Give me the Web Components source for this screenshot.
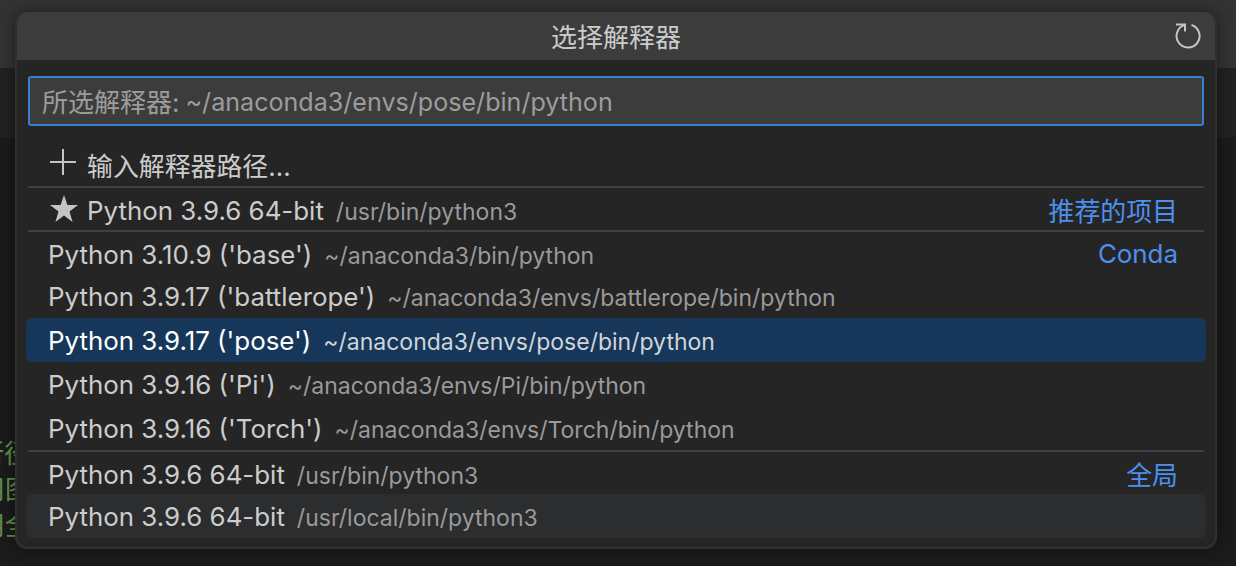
<!DOCTYPE html>
<html>
<head>
<meta charset="utf-8">
<title>选择解释器</title>
<style>
  html, body { margin: 0; height: 100%; background: #1e1e1e; overflow: hidden; }
  body { font-family: "Inter", "Noto Sans CJK SC", sans-serif; }
</style>
</head>
<body>
<editor-backdrop>
  <quick-pick title-text="选择解释器" prefix="所选解释器:" value="~/anaconda3/envs/pose/bin/python">
    <pick-row icon="plus" label="输入解释器路径..."></pick-row>
    <pick-row icon="star" sep label="Python 3.9.6 64-bit" desc="/usr/bin/python3" group="推荐的项目"></pick-row>
    <pick-row sep label="Python 3.10.9 ('base')" desc="~/anaconda3/bin/python" group="Conda"></pick-row>
    <pick-row label="Python 3.9.17 ('battlerope')" desc="~/anaconda3/envs/battlerope/bin/python"></pick-row>
    <pick-row selected label="Python 3.9.17 ('pose')" desc="~/anaconda3/envs/pose/bin/python"></pick-row>
    <pick-row label="Python 3.9.16 ('Pi')" desc="~/anaconda3/envs/Pi/bin/python"></pick-row>
    <pick-row label="Python 3.9.16 ('Torch')" desc="~/anaconda3/envs/Torch/bin/python"></pick-row>
    <pick-row sep label="Python 3.9.6 64-bit" desc="/usr/bin/python3" group="全局"></pick-row>
    <pick-row hover label="Python 3.9.6 64-bit" desc="/usr/local/bin/python3"></pick-row>
  </quick-pick>
</editor-backdrop>

<script>
class EditorBackdrop extends HTMLElement {
  connectedCallback() {
    this.attachShadow({ mode: 'open' });
    this.shadowRoot.innerHTML = `
      <style>
        :host { display: block; position: relative; width: 1236px; height: 566px; overflow: hidden; background: #1b1b1b; }
        .tabs { height: 68px; background: #333333; }
        .crumbs { height: 69px; background: #222222; }
        .lines { padding-top: 297px; color: #638f50; font: 26px/36px "Noto Sans CJK SC", sans-serif; white-space: nowrap; }
        .lines div { height: 36px; }
      </style>
      <div class="tabs"></div>
      <div class="crumbs"></div>
      <div class="lines">
        <div style="margin-left:-22px">所径</div>
        <div style="margin-left:-21px">用图</div>
        <div style="margin-left:-21px">用全</div>
      </div>
      <slot></slot>
    `;
  }
}

class QuickPick extends HTMLElement {
  connectedCallback() {
    this.attachShadow({ mode: 'open' });
    this.shadowRoot.innerHTML = `
      <style>
        :host {
          display: block; position: absolute; left: 15px; top: 12px; width: 1202px; height: 537px;
          box-sizing: border-box; background: #252526; border-radius: 12px; overflow: hidden;
          border: 2px solid #303031; border-top: 0; box-shadow: 0 0 16px rgba(0,0,0,.45);
        }
        .title {
          height: 48px; box-sizing: border-box; padding-bottom: 2px; background: #3c3c3c; color: #cccccc;
          font-size: 26px; font-family: "Noto Sans CJK SC", sans-serif;
          display: flex; align-items: center; justify-content: center; position: relative;
        }
        .refresh { position: absolute; right: 14px; top: 10px; width: 28px; height: 28px; }
        .input {
          margin: 16px 11px 0 11px; height: 50px; box-sizing: border-box; background: #3c3c3c;
          border: 2px solid #3a7fd0; border-radius: 3px; padding: 0 12px;
          display: flex; align-items: center; color: #9c9c9c; font-size: 25.100px;
          font-family: "Inter", "Noto Sans CJK SC", sans-serif; white-space: pre;
        }
        .input .cjk { font-size: 26px; margin: 0 6px 2px 0; }
        .input .val { padding-top: 2px; }
        .list { padding: 16px 9px 0 9px; display: flex; flex-direction: column; }
      </style>
      <div class="title">
        <span></span>
        <svg class="refresh" viewBox="0 0 28 28" fill="none" stroke="#c5c5c5" stroke-width="2">
          <path d="M12 2.900A11.500 11.500 0 1 0 18.500 3"/>
          <path d="M3 2.500H12V9.500"/>
        </svg>
      </div>
      <div class="input"><span class="cjk"></span><span class="val"></span></div>
      <div class="list"><slot></slot></div>
    `;
    this.shadowRoot.querySelector('.title span').textContent = this.getAttribute('title-text');
    this.shadowRoot.querySelector('.cjk').textContent = this.getAttribute('prefix');
    this.shadowRoot.querySelector('.val').textContent = this.getAttribute('value');
  }
}

const ICONS = {
  plus: '<svg width="26" height="26" viewBox="0 0 26 26" stroke="#c5c5c5" stroke-width="2"><path d="M0 13H26M13 0V26"/></svg>',
  star: '<svg width="28" height="27" viewBox="0 0 28 27" fill="#c5c5c5"><path d="M14 0L17.400 10H28L19.500 16.400L22.600 27L14 20.600L5.400 27L8.500 16.400L0 10H10.600Z"/></svg>'
};

class PickRow extends HTMLElement {
  connectedCallback() {
    this.attachShadow({ mode: 'open' });
    const icon = this.getAttribute('icon');
    this.shadowRoot.innerHTML = `
      <style>
        :host { display: block; position: relative; height: 44px; }
        .sep { position: absolute; left: 2px; right: 2px; top: 0; height: 2px; background: #3f3f46; border-radius: 1px; }
        .row {
          height: 44px; box-sizing: border-box; padding: 0 28px 0 22px; border-radius: 6px;
          display: flex; align-items: center; white-space: nowrap; color: #cccccc;
          font: 25.900px "Inter", "Noto Sans CJK SC", sans-serif;
        }
        :host([sep]) .row { padding-top: 5px; }
        .icon { display: flex; box-sizing: border-box; width: 39px; padding-left: 2px; flex: none; margin-top: -4px; }
        .desc { margin-left: 12px; padding-top: 3px; font-size: 23px; color: #9a9a9a; flex: 1; }
        .group { color: #4d90ee; margin-bottom: 3px; }
        :host([selected]) .row { background: #163759; color: #ffffff; }
        :host([selected]) .desc { color: #d0d5da; }
        :host([hover]) .row { background: #2b2d2f; }
      </style>
      <div class="row">
        ${icon ? `<span class="icon">${ICONS[icon]}</span>` : ''}
        <span class="label"></span>
        <span class="desc"></span>
        <span class="group"></span>
      </div>
      ${this.hasAttribute('sep') ? '<div class="sep"></div>' : ''}
    `;
    this.shadowRoot.querySelector('.label').textContent = this.getAttribute('label');
    this.shadowRoot.querySelector('.desc').textContent = this.getAttribute('desc') || '';
    this.shadowRoot.querySelector('.group').textContent = this.getAttribute('group') || '';
  }
}

customElements.define('editor-backdrop', EditorBackdrop);
customElements.define('quick-pick', QuickPick);
customElements.define('pick-row', PickRow);
</script>
</body>
</html>
